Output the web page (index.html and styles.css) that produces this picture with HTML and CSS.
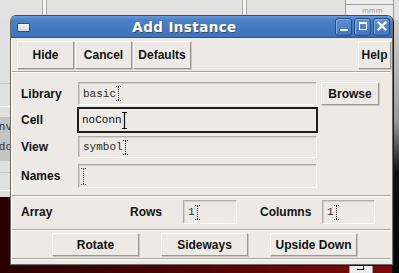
FILE: index.html
```html
<!DOCTYPE html>
<html>
<head>
<meta charset="utf-8">
<link rel="stylesheet" href="styles.css">
</head>
<body>
<div class="desktop">
  <div class="bg-top">
    <div class="vline vline-a"></div>
    <div class="vline vline-b"></div>
    <div class="bg-box"><span class="bg-box-text">mmm</span></div>
  </div>
  <div class="bg-left">
    <div class="bg-band"><span>nv</span><span>do</span></div>
  </div>
  <div class="bg-red"></div>
  <div class="bg-right"></div>
  <div class="bg-mini"><span class="bracket"></span></div>

  <div class="dialog">
    <div class="titlebar">
      <span class="win-icon"></span>
      <span class="title">Add Instance</span>
      <div class="wm-buttons">
        <span class="wm-btn"><svg width="14" height="15" viewBox="0 0 14 15"><rect x="3" y="10" width="8" height="2" fill="#fff"/></svg></span>
        <span class="wm-btn"><svg width="14" height="15" viewBox="0 0 14 15"><rect x="3.5" y="3.5" width="7" height="7" fill="none" stroke="#fff" stroke-width="1"/><rect x="3" y="3" width="8" height="2" fill="#fff"/></svg></span>
        <span class="wm-btn"><svg width="14" height="15" viewBox="0 0 14 15"><path d="M3.5 3.5 L10.5 10.5 M10.5 3.5 L3.5 10.5" stroke="#fff" stroke-width="2.2" stroke-linecap="square"/></svg></span>
      </div>
    </div>
    <div class="body">
      <div class="toolbar">
        <button class="btn btn-hide">Hide</button>
        <button class="btn btn-cancel">Cancel</button>
        <button class="btn btn-defaults">Defaults</button>
        <span class="spacer"></span>
        <button class="btn btn-help">Help</button>
      </div>
      <div class="sep"></div>
      <div class="form">
        <div class="row row-library">
          <span class="label">Library</span>
          <span class="field field-library">basic<svg class="ibeam" width="5" height="15" viewBox="0 0 5 15"><path d="M0 0.5 H5 M2.5 1 V14 M0 14.5 H5" stroke="#222" stroke-width="1" stroke-dasharray="1 1"/></svg></span>
          <button class="btn btn-browse">Browse</button>
        </div>
        <div class="row row-cell">
          <span class="label">Cell</span>
          <span class="field field-cell">noConn<svg class="ibeam solid" width="5" height="17" viewBox="0 0 5 17"><path d="M0 0.5 H5 M2.5 1 V16 M0 16.5 H5" stroke="#111" stroke-width="1.2"/></svg></span>
        </div>
        <div class="row row-view">
          <span class="label">View</span>
          <span class="field field-view">symbol<svg class="ibeam" width="5" height="15" viewBox="0 0 5 15"><path d="M0 0.5 H5 M2.5 1 V14 M0 14.5 H5" stroke="#222" stroke-width="1" stroke-dasharray="1 1"/></svg></span>
        </div>
        <div class="row row-names">
          <span class="label">Names</span>
          <span class="field field-names"><svg class="ibeam" width="5" height="17" viewBox="0 0 5 17"><path d="M0 0.5 H5 M2.5 1 V16 M0 16.5 H5" stroke="#444" stroke-width="1" stroke-dasharray="1 1"/></svg></span>
        </div>
      </div>
      <div class="sep sep-2"></div>
      <div class="array-row">
        <span class="label label-array">Array</span>
        <span class="label label-rows">Rows</span>
        <span class="field field-small">1<svg class="ibeam" width="5" height="15" viewBox="0 0 5 15"><path d="M0 0.5 H5 M2.5 1 V14 M0 14.5 H5" stroke="#333" stroke-width="1" stroke-dasharray="1 1"/></svg></span>
        <span class="label label-columns">Columns</span>
        <span class="field field-small">1<svg class="ibeam" width="5" height="15" viewBox="0 0 5 15"><path d="M0 0.5 H5 M2.5 1 V14 M0 14.5 H5" stroke="#333" stroke-width="1" stroke-dasharray="1 1"/></svg></span>
      </div>
      <div class="sep sep-3"></div>
      <div class="actions">
        <button class="btn btn-action">Rotate</button>
        <button class="btn btn-action">Sideways</button>
        <button class="btn btn-action">Upside Down</button>
      </div>
      <div class="sep sep-4"></div>
    </div>
  </div>
</div>
</body>
</html>
```

FILE: styles.css
```css
html, body {
  margin: 0;
  padding: 0;
}
body {
  width: 399px;
  height: 273px;
  overflow: hidden;
  font-family: "Liberation Sans", Arial, sans-serif;
  background: #dcdcdc;
}
.desktop {
  position: relative;
  width: 399px;
  height: 273px;
  overflow: hidden;
}

/* background windows on the desktop */
.bg-top {
  position: absolute;
  left: 0;
  top: 0;
  width: 399px;
  height: 20px;
  background: #e2e2e2;
}
.vline {
  position: absolute;
  top: 0;
  width: 3px;
  height: 20px;
  border-left: 1px solid #a9a9a9;
  border-right: 1px solid #a9a9a9;
  background: #f4f4f4;
}
.vline-a { left: 42px; }
.vline-b { left: 242px; }
.bg-box {
  position: absolute;
  left: 345px;
  top: 0;
  width: 47px;
  height: 20px;
  background: #ececec;
  border-left: 1px solid #9a9a9a;
  border-right: 1px solid #9a9a9a;
}
.bg-box::before {
  content: "";
  position: absolute;
  left: 0;
  right: 0;
  top: 4px;
  border-top: 1px solid #a0a0a0;
}
.bg-box-text {
  position: absolute;
  left: 16px;
  top: 7px;
  font-size: 7px;
  color: #9a9a9a;
  font-family: "DejaVu Sans", sans-serif;
}
.bg-left {
  position: absolute;
  left: 0;
  top: 20px;
  width: 30px;
  height: 177px;
  background: #e0e0e0;
  background-image:
    linear-gradient(#c8c8c8, #c8c8c8),
    linear-gradient(#fafafa, #fafafa),
    linear-gradient(#c8c8c8, #c8c8c8),
    linear-gradient(#fafafa, #fafafa);
  background-size: 100% 1px;
  background-repeat: no-repeat;
  background-position: 0 63px, 0 86px, 0 152px, 0 170px;
}
.bg-band {
  position: absolute;
  left: -10px;
  top: 97px;
  width: 30px;
  height: 44px;
  background: #c3c3c3;
  display: flex;
  flex-direction: column;
  align-items: flex-end;
  padding-top: 0;
  box-sizing: border-box;
  font-family: "Liberation Mono", monospace;
  font-size: 11px;
  line-height: 20px;
  color: #333;
  padding-right: 8px;
}
.bg-red {
  position: absolute;
  left: 0;
  top: 197px;
  width: 399px;
  height: 76px;
  background: linear-gradient(90deg, #2a0101 0%, #4a0303 45%, #6f0808 80%, #7a0a0a 100%);
}
.bg-right {
  position: absolute;
  left: 392px;
  top: 20px;
  width: 7px;
  height: 253px;
  background: linear-gradient(#d0d0d0 0%, #9a9a9a 40%, #111 60%, #050505 100%);
}
.bg-mini {
  position: absolute;
  left: 349px;
  top: 262px;
  width: 22px;
  height: 11px;
  background: #ececec;
  border-left: 1px solid #999;
  border-right: 1px solid #999;
}
.bracket {
  position: absolute;
  left: 7px;
  top: 2px;
  width: 6px;
  height: 5px;
  border-right: 1px solid #222;
  border-bottom: 1px solid #222;
}

/* the dialog window */
.dialog {
  position: absolute;
  left: 10px;
  top: 15px;
  width: 381px;
  background: #edeae5;
  border: 1px solid #6b6b6b;
  border-top-color: #2b4f85;
  border-radius: 6px 6px 0 0;
  box-shadow: 1px 1px 0 #1a1a1a;
}
.titlebar {
  height: 21px;
  display: flex;
  align-items: center;
  background: linear-gradient(#6a9ad8 0%, #4c80c6 20%, #3e72bb 100%);
  border-radius: 5px 5px 0 0;
  border-bottom: 1px solid #2c528a;
  padding: 0 2px 0 6px;
}
.win-icon {
  width: 11px;
  height: 7px;
  background: linear-gradient(#f4f4f4, #d0d4da);
  border: 1px solid #2e4c7a;
  border-radius: 1px;
  margin-top: 1px;
}
.title {
  flex: 1;
  text-align: center;
  color: #fff;
  font-family: "DejaVu Sans", sans-serif;
  font-weight: bold;
  font-size: 13.5px;
  letter-spacing: 0.4px;
  text-shadow: 1px 1px 0 #3a4f6e;
  padding-left: 4px;
}
.wm-buttons {
  display: flex;
  gap: 2px;
}
.wm-btn {
  width: 15px;
  height: 16px;
  border: 1px solid #2b4d80;
  border-radius: 3px;
  background: linear-gradient(#5e90d2, #4476bd);
  box-shadow: inset 1px 1px 0 #86addf;
  display: flex;
  align-items: center;
  justify-content: center;
}

.body {
  padding: 3px 1px 4px 0;
  border-left: 1px solid #fbfbfb;
}
.toolbar {
  display: flex;
  gap: 1px;
  padding-left: 5px;
}
.btn {
  font-family: "Liberation Sans", Arial, sans-serif;
  font-weight: bold;
  font-size: 12px;
  color: #111;
  background: #edeae5;
  border: 1px solid;
  border-color: #ffffff #9b9892 #9b9892 #ffffff;
  box-shadow: 1px 1px 0 #c9c6c0;
  padding: 0;
  margin: 0;
  box-sizing: border-box;
  display: flex;
  align-items: center;
  justify-content: center;
}
.btn-hide, .btn-cancel { width: 57px; height: 28px; }
.btn-defaults { width: 58px; height: 28px; }
.btn-help { width: 33px; height: 28px; }
.spacer { flex: 1; }

.sep {
  height: 0;
  border-top: 1px solid #aaa69f;
  border-bottom: 1px solid #ffffff;
  margin: 2px 0 0 0;
}

.form {
  padding-top: 9px;
  padding-left: 9px;
}
.row {
  display: flex;
  align-items: center;
}
.label {
  font-weight: bold;
  font-size: 12px;
  color: #111;
}
.row .label { width: 57px; }
.field {
  box-sizing: border-box;
  display: flex;
  align-items: center;
  background: #edeae5;
  border: 1px solid;
  border-color: #b1ada6 #ffffff #ffffff #b1ada6;
  box-shadow: inset 1px 1px 0 #d3d0ca;
  font-family: "Liberation Mono", monospace;
  font-size: 11px;
  color: #2a2a2a;
  padding-left: 4px;
}
.ibeam { display: block; margin-left: 0; }
.field-library { width: 239px; height: 23px; }
.btn-browse { width: 58px; height: 23px; margin-left: 4px; }
.row-cell { margin-top: 2px; }
.field-cell {
  width: 241px;
  height: 26px;
  margin-left: -1px;
  border: 2px solid #1e1e1e;
  box-shadow: none;
  padding-left: 3px;
  color: #111;
}
.row-view { margin-top: 3px; }
.field-view { width: 239px; height: 22px; }
.row-names { margin-top: 6px; }
.field-names { width: 239px; height: 24px; padding-left: 2px; }

.sep-2 { margin-top: 7px; }
.array-row {
  display: flex;
  align-items: center;
  margin-top: 3px;
  padding-left: 9px;
}
.label-array { width: 109px; }
.label-rows { width: 53px; }
.label-columns { width: 62px; margin-left: 23px; }
.field-small { width: 54px; height: 24px; }
.field-small:last-child { width: 53px; }

.sep-3 { margin-top: 5px; }
.actions {
  display: flex;
  gap: 22px;
  margin-top: 2px;
  padding-left: 40px;
}
.btn-action { width: 87px; height: 23px; }
.sep-4 { margin-top: 2px; }
```
